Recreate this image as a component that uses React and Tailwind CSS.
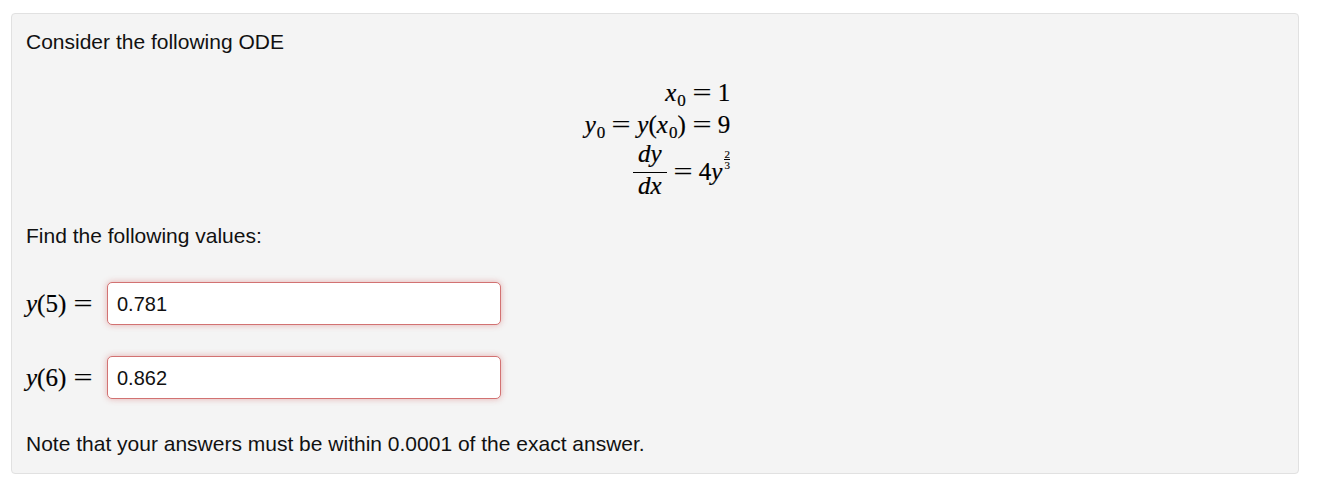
export default function App() {
  const sans = { fontFamily: '"Liberation Sans", Arial, sans-serif' };
  const serif = { fontFamily: '"Liberation Serif", "Times New Roman", serif' };
  const I = ({ children }) => <i className="italic">{children}</i>;
  const Sub = ({ children }) => (
    <span className="text-[17px] not-italic relative top-[5px] ml-[1px]">{children}</span>
  );
  const Eq = () => <span className="inline-block scale-x-[1.35] mx-[9px]">=</span>;
  const stroke = "[-webkit-text-stroke:0.2px_black]";
  return (
    <div className="w-[1321px] h-[487px] bg-white pt-[13px] pl-[11px]" style={sans}>
      <div className="w-[1288px] h-[461px] bg-[#f4f4f4] border border-[#e1e1e1] rounded-[4px] px-[14px] pt-[16px] text-[21px] text-[#111]">
        <div className="leading-[24px]">Consider the following ODE</div>
        <div className="flex justify-center mt-[23px] ml-[5px]" style={serif}>
          <div className={"flex flex-col items-end text-[25px] text-black " + stroke}>
            <div className="h-[32px] leading-[32px] whitespace-nowrap">
              <span><I>x</I><Sub>0</Sub><Eq />1</span>
            </div>
            <div className="h-[32px] leading-[32px] whitespace-nowrap">
              <span><I>y</I><Sub>0</Sub><Eq /><I>y</I>(<I>x</I><Sub>0</Sub>)<Eq />9</span>
            </div>
            <div className="flex items-center whitespace-nowrap">
              <div className="flex flex-col items-center">
                <div className="h-[26px] leading-[26px] px-[5px]"><I>dy</I></div>
                <div className="h-[1px] w-full bg-black mt-[5px]"></div>
                <div className="h-[26px] leading-[26px] px-[5px]"><I>dx</I></div>
              </div>
              <span className="leading-[26px] mt-[3px]">
                <Eq />4<I>y</I>
                <span className="relative -top-[14px] inline-flex flex-col items-center align-middle text-[11px] leading-[10px] ml-[2px] [-webkit-text-stroke:0.15px_black]">
                  <span>2</span>
                  <span className="h-[1px] w-[6px] bg-black"></span>
                  <span>3</span>
                </span>
              </span>
            </div>
          </div>
        </div>
        <div className="mt-[25px] leading-[24px]">Find the following values:</div>
        <div className="mt-[34px] flex items-center">
          <div className={"w-[81px] text-[25px] whitespace-nowrap text-black " + stroke} style={serif}>
            <I>y</I>(5)<span className="inline-block scale-x-[1.35] ml-[10px]">=</span>
          </div>
          <div className="w-[394px] h-[43px] bg-white border border-[#d27272] rounded-[5px] shadow-[0_0_6px_rgba(210,90,90,0.45)] flex items-center pl-[9px] text-[20px]">0.781</div>
        </div>
        <div className="mt-[31px] flex items-center">
          <div className={"w-[81px] text-[25px] whitespace-nowrap text-black " + stroke} style={serif}>
            <I>y</I>(6)<span className="inline-block scale-x-[1.35] ml-[10px]">=</span>
          </div>
          <div className="w-[394px] h-[43px] bg-white border border-[#d27272] rounded-[5px] shadow-[0_0_6px_rgba(210,90,90,0.45)] flex items-center pl-[9px] text-[20px]">0.862</div>
        </div>
        <div className="mt-[33px] leading-[24px]">Note that your answers must be within 0.0001 of the exact answer.</div>
      </div>
    </div>
  );
}
